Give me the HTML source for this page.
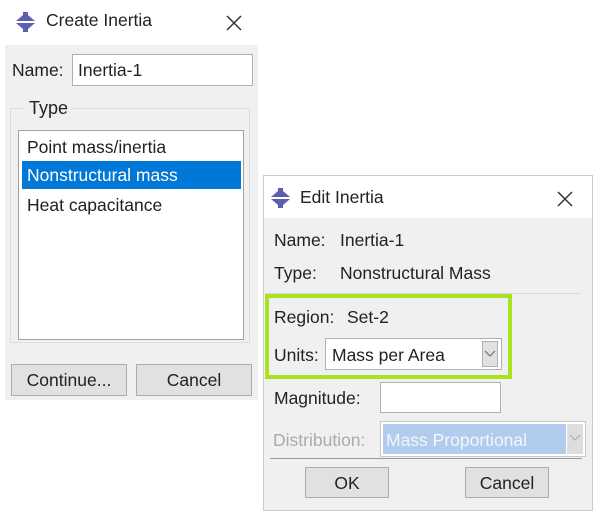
<!DOCTYPE html>
<html><head><style>
body{margin:0;width:600px;height:514px;background:#fff;position:relative;overflow:hidden;font-family:"Liberation Sans",sans-serif;font-size:17.5px;color:#222}
.a{position:absolute;white-space:nowrap}
.btn{position:absolute;background:#e1e1e1;border:1px solid #adadad;text-align:center;box-sizing:border-box;line-height:30px;font-size:17.5px}
.inp{position:absolute;background:#fff;border:1px solid #b0b0b0;box-sizing:border-box}
</style></head><body>
<!-- Create Inertia -->
<div class="a" style="left:5px;top:45px;width:253px;height:355px;background:#f0f0f0"></div>
<svg class="a" style="left:15px;top:12px" width="21" height="20" viewBox="0 0 21 20"><path d="M8 0H13V3L20 9H1L8 3Z M1 11H20L13 17V20H8V17Z" fill="#5c5fae"/><rect x="1" y="9" width="19" height="2" fill="#fff"/></svg>
<div class="a" style="left:46px;top:10px;font-size:17.5px">Create Inertia</div>
<svg class="a" style="left:226px;top:15px" width="16" height="16"><path d="M1 1L15 15M15 1L1 15" stroke="#333" stroke-width="1.5"/></svg>
<div class="a" style="left:12px;top:60px">Name:</div>
<div class="inp" style="left:72px;top:54px;width:181px;height:32px"></div>
<div class="a" style="left:78px;top:60px">Inertia-1</div>
<div class="a" style="left:10px;top:108px;width:240px;height:235px;border:1px solid #dcdcdc;box-sizing:border-box"></div>
<div class="a" style="left:24px;top:98px;background:#f0f0f0;padding:0 5px;font-size:18px">Type</div>
<div class="a" style="left:18px;top:130px;width:226px;height:210px;background:#fff;border:1px solid #a0a0a0;box-sizing:border-box"></div>
<div class="a" style="left:27px;top:137px">Point mass/inertia</div>
<div class="a" style="left:22px;top:161px;width:219px;height:28px;background:#0078d7"></div>
<div class="a" style="left:27px;top:165px;color:#fff">Nonstructural mass</div>
<div class="a" style="left:27px;top:195px">Heat capacitance</div>
<div class="btn" style="left:11px;top:364px;width:116px;height:32px">Continue...</div>
<div class="btn" style="left:136px;top:364px;width:116px;height:32px">Cancel</div>
<!-- Edit Inertia -->
<div class="a" style="left:263px;top:175px;width:330px;height:336px;border:1px solid #ccc;box-sizing:border-box;background:#f0f0f0"></div>
<div class="a" style="left:264px;top:176px;width:328px;height:42px;background:#fff"></div>
<svg class="a" style="left:270px;top:188px" width="21" height="20" viewBox="0 0 21 20"><path d="M8 0H13V3L20 9H1L8 3Z M1 11H20L13 17V20H8V17Z" fill="#5c5fae"/><rect x="1" y="9" width="19" height="2" fill="#fff"/></svg>
<div class="a" style="left:300px;top:187px;font-size:17.5px">Edit Inertia</div>
<svg class="a" style="left:557px;top:191px" width="16" height="16"><path d="M1 1L15 15M15 1L1 15" stroke="#333" stroke-width="1.5"/></svg>
<div class="a" style="left:274px;top:230px">Name:</div>
<div class="a" style="left:340px;top:230px">Inertia-1</div>
<div class="a" style="left:274px;top:263px">Type:</div>
<div class="a" style="left:340px;top:263px">Nonstructural Mass</div>
<div class="a" style="left:265px;top:293px;width:316px;height:1px;background:#d8d8d8"></div>
<div class="a" style="left:265px;top:294px;width:247px;height:85px;border:4px solid #a9e21f;box-sizing:border-box"></div>
<div class="a" style="left:274px;top:307px">Region:</div>
<div class="a" style="left:347px;top:307px">Set-2</div>
<div class="a" style="left:274px;top:345px">Units:</div>
<div class="inp" style="left:325px;top:338px;width:177px;height:32px"></div>
<div class="a" style="left:332px;top:345px">Mass per Area</div>
<div class="a" style="left:482px;top:341px;width:16px;height:26px;background:#e1e1e1;border:1px solid #b0b0b0;box-sizing:border-box"></div>
<svg class="a" style="left:484px;top:350px" width="12" height="8"><path d="M1 1L6 6L11 1" stroke="#666" fill="none"/></svg>
<div class="a" style="left:274px;top:388px">Magnitude:</div>
<div class="inp" style="left:380px;top:382px;width:121px;height:31px"></div>
<div class="a" style="left:273px;top:430px;color:#aaa">Distribution:</div>
<div class="a" style="left:380px;top:421px;width:206px;height:36px;background:#fff;border:1px solid #c8c8c8;box-sizing:border-box"></div>
<div class="a" style="left:383px;top:424px;width:183px;height:30px;background:#b1ccec"></div>
<div class="a" style="left:386px;top:430px;color:#f4f6fa">Mass Proportional</div>
<div class="a" style="left:567px;top:424px;width:16px;height:30px;background:#ddd"></div>
<svg class="a" style="left:569px;top:434px" width="12" height="8"><path d="M1 1L6 6L11 1" stroke="#aaa" fill="none"/></svg>
<div class="a" style="left:270px;top:458px;width:312px;height:1px;background:#999"></div>
<div class="btn" style="left:305px;top:467px;width:84px;height:31px">OK</div>
<div class="btn" style="left:465px;top:467px;width:84px;height:31px">Cancel</div>
</body></html>
